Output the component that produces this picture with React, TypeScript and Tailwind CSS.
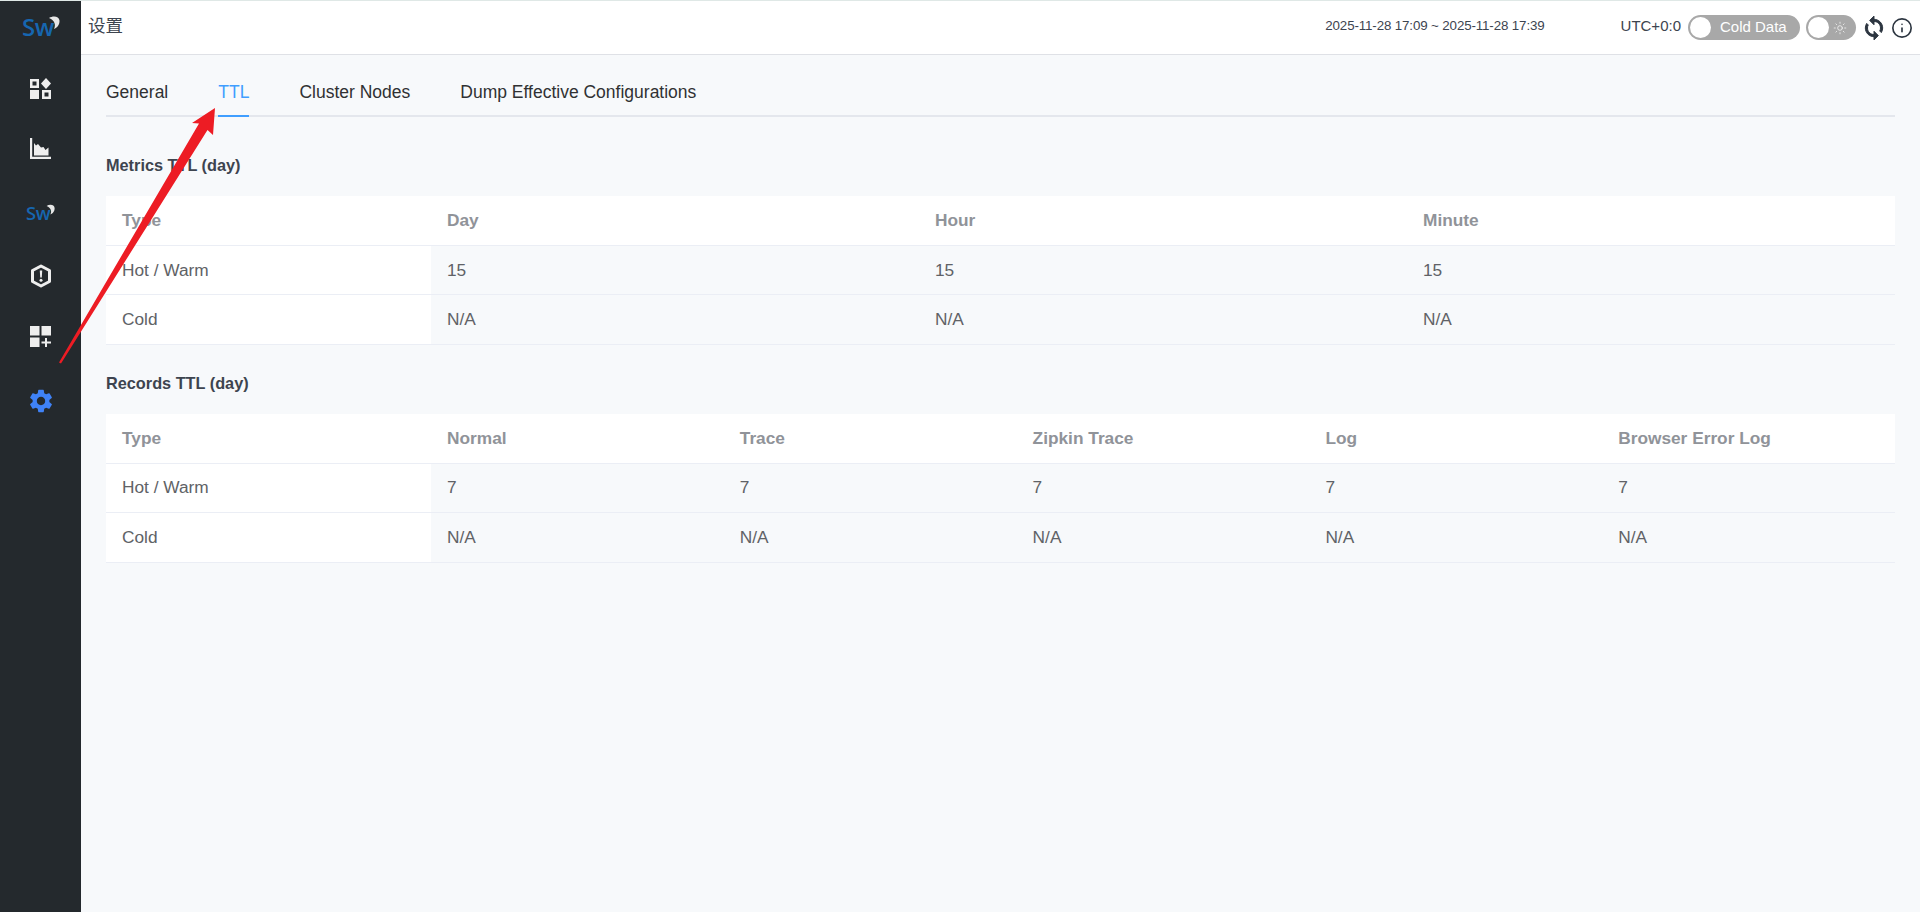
import { Sun, Info } from "lucide-react";
import { MdSettings } from "react-icons/md";

const SwLogo = ({ size }: { size: "lg" | "sm" }) => (
    <svg
        width={size === "lg" ? 38 : 29}
        height={size === "lg" ? 35 : 27}
        viewBox="0 -7 38 35"
    >
        <text x="0" y="20" fill="#1666b0" fontSize="24" fontWeight="600" fontFamily="'Open Sans', sans-serif" letterSpacing="-0.5">
            Sw
        </text>
        <path d="M27 2 C31 -0.500 37 0 37.500 4.500 C37.800 8.500 35 12 32 13 C34 9 33 4.500 27 2 Z" fill="#e6e6e6" />
    </svg>
);

const IconDashboard = () => (
    <svg width="21" height="21" viewBox="0 0 21 21" fill="#eeeeee" fillRule="evenodd">
        <path d="M0 1h9v9H0z M2.500 3.500v4h4v-4z" />
        <path d="M16 0l5 5.500-5 5.500-5-5.500z" />
        <path d="M0 12h9v9H0z" />
        <path d="M12 12h9v9h-9z M14.500 14.500v4h4v-4z" />
    </svg>
);

const IconMetrics = () => (
    <svg width="21" height="21" viewBox="0 0 21 21" fill="#eeeeee" className="mb-[4px]">
        <path d="M0 0h2.200v18.800H21V21H0z" />
        <path d="M4 17.500V5l2 2.500 2-1.500 3 3.500 2.500-.5 2 3 3-2.500v8z" />
    </svg>
);

const IconAlert = () => (
    <svg width="22" height="24" viewBox="0 0 22 24" className="mt-[3px]">
        <path d="M11 2l8.500 4.500v11L11 22l-8.500-4.500v-11z" fill="none" stroke="#eeeeee" strokeWidth="3" strokeLinejoin="round" />
        <path d="M9.800 6.500h2.400l-.4 7h-1.600z" fill="#eeeeee" />
        <circle cx="11" cy="16.200" r="1.500" fill="#eeeeee" />
    </svg>
);

const IconAddBoard = () => (
    <svg width="21" height="21" viewBox="0 0 21 21" fill="#eeeeee">
        <path d="M0 0h9.500v9.500H0z" />
        <path d="M11.500 0H21v9.500h-9.500z" />
        <path d="M0 11.500h9.500V21H0z" />
        <path d="M15 12h2v3.500h4v2h-4V21h-2v-3.500h-3.500v-2H15z" />
    </svg>
);

const IconSync = () => (
    <svg width="26" height="26" viewBox="0 0 24 24" fill="#2c3540" stroke="#2c3540" strokeWidth="0.9" className="ml-[5px]">
        <path d="M12 4V1L8 5l4 4V6c3.310 0 6 2.690 6 6 0 1.010-.25 1.970-.7 2.800l1.460 1.460C19.540 15.030 20 13.570 20 12c0-4.420-3.580-8-8-8zm0 14c-3.310 0-6-2.690-6-6 0-1.010.25-1.970.7-2.800L5.240 7.740C4.460 8.970 4 10.430 4 12c0 4.420 3.580 8 8 8v3l4-4-4-4v3z" />
    </svg>
);

const menu = [
    <IconDashboard key="dashboard" />,
    <IconMetrics key="metrics" />,
    <SwLogo key="sw" size="sm" />,
    <IconAlert key="alert" />,
    <IconAddBoard key="add" />,
    <MdSettings key="settings" size={28} color="#3f82f7" className="mt-[5px]" />,
];

const tabs = ["General", "TTL", "Cluster Nodes", "Dump Effective Configurations"];

const metricsTable = {
    columns: "grid-cols-[325px_repeat(3,1fr)]",
    head: ["Type", "Day", "Hour", "Minute"],
    rows: [
        ["Hot / Warm", "15", "15", "15"],
        ["Cold", "N/A", "N/A", "N/A"],
    ],
};

const recordsTable = {
    columns: "grid-cols-[325px_repeat(5,1fr)]",
    head: ["Type", "Normal", "Trace", "Zipkin Trace", "Log", "Browser Error Log"],
    rows: [
        ["Hot / Warm", "7", "7", "7", "7", "7"],
        ["Cold", "N/A", "N/A", "N/A", "N/A", "N/A"],
    ],
};

const TtlTable = ({ data }: { data: typeof metricsTable }) => (
    <div className="text-[17.300px]">
        <div className={`grid ${data.columns} h-[49.670px] bg-white border-b border-[#ebeef5] font-bold text-[#909399]`}>
            {data.head.map((cell, i) => (
                <div key={i} className="flex items-center pl-4 pt-px">{cell}</div>
            ))}
        </div>
        {data.rows.map((row, r) => (
            <div key={r} className={`grid ${data.columns} h-[49.670px] border-b border-[#ebeef5] text-[#606266]`}>
                {row.map((cell, i) => (
                    <div key={i} className={`flex items-center pl-4 pt-px ${i === 0 ? "bg-white" : ""}`}>{cell}</div>
                ))}
            </div>
        ))}
    </div>
);

export default function App() {
    return (
        <div className="relative h-[912px] overflow-hidden bg-[#f7f9fb] font-['Liberation_Sans',Arial,sans-serif]">
            <div className="h-px bg-[#dfe8e6]"></div>
            <div className="flex h-[911px]">
                {/* menu */}
                <div className="flex w-[81px] flex-col items-center bg-[#24292d]">
                    <div className="flex h-[56px] w-full items-center justify-center pb-[6px]">
                        <SwLogo size="lg" />
                    </div>
                    {menu.map((icon, i) => (
                        <div key={i} className="flex h-[62px] w-full items-center justify-center">
                            {icon}
                        </div>
                    ))}
                </div>

                <div className="flex min-w-0 flex-1 flex-col">
                    {/* header */}
                    <div className="flex h-[54px] items-center border-b border-[#dfe1e6] bg-white pl-[7px] pr-[7px]">
                        <span className="mb-[4px] text-[17.500px] text-[#3d444f] font-['Noto_Sans_CJK_SC',sans-serif]">设置</span>
                        <span className="mb-[2px] ml-auto text-[13.350px] tracking-[-0.010em] text-[#3d444f]">
                            2025-11-28 17:09 ~ 2025-11-28 17:39
                        </span>
                        <span className="mb-[2px] ml-[76px] text-[15px] text-[#3d444f]">UTC+0:0</span>
                        <div className="ml-[7px] flex h-[25px] w-[112px] items-center rounded-full bg-[#a8a8a8] pl-[2px]">
                            <span className="h-[21px] w-[21px] rounded-full bg-white"></span>
                            <span className="ml-[9px] text-[15px] text-white">Cold Data</span>
                        </div>
                        <div className="ml-[6px] flex h-[25px] w-[50px] items-center rounded-full bg-[#a8a8a8] pl-[2px]">
                            <span className="h-[21px] w-[21px] rounded-full bg-white"></span>
                            <Sun size={14} color="#ffffff" strokeWidth={1.2} className="ml-[4px]" />
                        </div>
                        <IconSync />
                        <Info size={22} color="#2c3540" strokeWidth={1.8} className="ml-[4px]" />
                    </div>

                    <div className="px-[25px]">
                        {/* tabs */}
                        <div className="mt-[15px] flex h-[47px] border-b-2 border-[#e4e7ed] text-[17.500px] text-[#303133]">
                            {tabs.map((tab, i) => (
                                <div
                                    key={i}
                                    className={`-mb-[2px] flex items-center border-b-2 ${i === 0 ? "" : "ml-[50px]"} ${
                                        tab === "TTL" ? "border-[#409eff] text-[#409eff]" : "border-transparent"
                                    }`}
                                >
                                    {tab}
                                </div>
                            ))}
                        </div>

                        <h2 className="mt-[39px] mb-[20px] h-5 text-[16.300px] leading-[19px] font-bold text-[#3d444f]">Metrics TTL (day)</h2>
                        <TtlTable data={metricsTable} />

                        <h2 className="mt-[29px] mb-[20px] h-5 text-[16.300px] leading-[19px] font-bold text-[#3d444f]">Records TTL (day)</h2>
                        <TtlTable data={recordsTable} />
                    </div>
                </div>
            </div>

            {/* annotation arrow over the page */}
            <svg className="pointer-events-none absolute left-0 top-0" width="240" height="380">
                <polygon points="59,362.500 199,123.500 192,123 215,108 213,135 207.500,130 61,363.500" fill="#ed1c24" />
            </svg>
        </div>
    );
}
